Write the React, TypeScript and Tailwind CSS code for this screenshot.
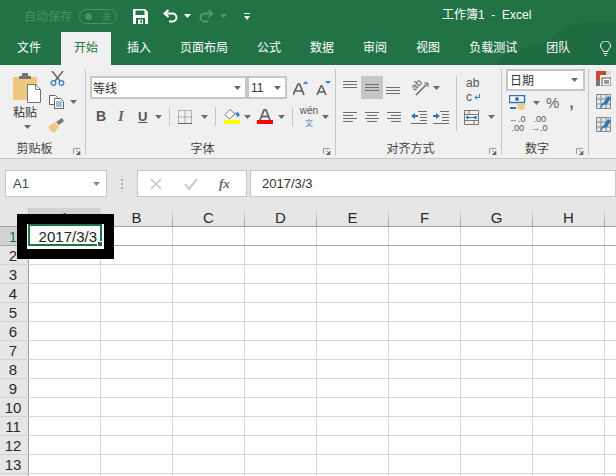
const sansFont = "font-['Liberation_Sans','Noto_Sans_CJK_SC',sans-serif]";

const tabs = ['文件', '开始', '插入', '页面布局', '公式', '数据', '审阅', '视图', '负载测试', '团队'];
const columns = ['A', 'B', 'C', 'D', 'E', 'F', 'G', 'H', ''];
const rows = [1, 2, 3, 4, 5, 6, 7, 8, 9, 10, 11, 12, 13, 14];

function Caret({ className = '', color = '#6a6a6a' }: { className?: string; color?: string }) {
    return (
        <svg width="7" height="4" viewBox="0 0 7 4" className={`shrink-0 ${className}`}>
            <path d="M0 0h7L3.5 4z" fill={color} />
        </svg>
    );
}

function Launcher() {
    return (
        <svg width="8" height="7" viewBox="0 0 8 7" className="absolute right-[4px] bottom-[0px]">
            <path d="M0.5 6V0.5H7" fill="none" stroke="#9a9a9a" />
            <path d="M3 2l3.5 3.5M7 3v4H3z" fill="#6a6a6a" stroke="#6a6a6a" strokeWidth="0.7" />
        </svg>
    );
}

function Lines({ ys, xs }: { ys: number[]; xs: [number, number][] }) {
    return (
        <svg width="15" height="15" viewBox="0 0 15 15" className="shrink-0">
            {ys.map((y, i) => (
                <path key={i} d={`M${xs[i][0]} ${y}.5H${xs[i][1]}`} stroke="#6f6f6f" />
            ))}
        </svg>
    );
}

const full: [number, number][] = [[0, 14], [0, 14], [0, 14], [0, 14]];

function Group({ width, label, children, launcher = true }: { width: string; label: string; children: React.ReactNode; launcher?: boolean }) {
    return (
        <div className={`relative flex h-[86px] shrink-0 flex-col border-r border-[#c6c6c6] ${width}`}>
            <div className="h-[71px]">{children}</div>
            <div className="flex h-[15px] items-center justify-center pr-[16px] text-[12px] leading-none text-[#444]">{label}</div>
            {launcher && <Launcher />}
        </div>
    );
}

function TitleBar() {
    return (
        <div className="flex h-[32px] items-center">
            <span className="ml-[24px] text-[12px] text-[#4d8f68]">自动保存</span>
            <div className="ml-[7px] flex h-[15px] w-[38px] items-center justify-between rounded-full border border-[#4d8f68] pr-[5px] pl-[5px]">
                <div className="h-[7px] w-[7px] rounded-full bg-[#4d8f68]" />
                <span className="text-[9px] leading-none text-[#4d8f68]">关</span>
            </div>
            <svg width="15" height="15" viewBox="0 0 15 15" className="ml-[16px]">
                <path d="M0 0h12l3 3v12H0z" fill="#fff" />
                <path d="M2.500 1.500h9v4.500h-9z" fill="#217346" />
                <path d="M3 9h9v6H3z" fill="#217346" />
                <path d="M5 10.500h5V15H5z" fill="#fff" />
                <path d="M7.500 11h1.500v3H7.500z" fill="#217346" />
            </svg>
            <svg width="15" height="14" viewBox="0 0 15 14" className="ml-[15px]">
                <path d="M5.500 1L1.500 4.500l4 3.500" fill="none" stroke="#fff" strokeWidth="2" />
                <path d="M2 4.500h7.500a4 4 0 0 1 0 8H6" fill="none" stroke="#fff" strokeWidth="2" />
            </svg>
            <Caret className="ml-[6px]" color="#fff" />
            <svg width="15" height="14" viewBox="0 0 15 14" className="ml-[8px]">
                <path d="M9.500 1l4 3.500-4 3.500" fill="none" stroke="#56966f" strokeWidth="2" />
                <path d="M13 4.500H5.500a4 4 0 0 0 0 8H9" fill="none" stroke="#56966f" strokeWidth="2" />
            </svg>
            <Caret className="ml-[6px]" color="#56966f" />
            <svg width="6" height="7" viewBox="0 0 6 7" className="ml-[17px]">
                <path d="M0 0h6v1H0zM0 3h6L3 7z" fill="#fff" />
            </svg>
            <span className={`absolute left-[442px] pb-[2px] text-[12px] whitespace-pre text-white ${sansFont}`}>工作簿1  -  Excel</span>
        </div>
    );
}

function TabRow() {
    return (
        <div className="flex h-[33px] gap-[3px] pl-[4px]">
            {tabs.map((t, i) => (
                <div
                    key={t}
                    className={`flex items-center px-[13px] pb-[3px] text-[12px] ${i === 1 ? 'bg-[#f0f0f0] text-[#217346]' : 'text-white'} ${i === 0 ? 'mr-[4px]' : ''}`}
                >
                    {t}
                </div>
            ))}
            <svg width="11" height="15" viewBox="0 0 11 15" className="mt-[9px] ml-[14px]">
                <path d="M3.500 10.500C3 8 .5 7.500.5 5a5 5 0 0 1 10 0c0 2.500-2.500 3-3 5.500zM3.500 12.500h4M4.500 14.500h2" fill="none" stroke="#fff" />
            </svg>
        </div>
    );
}

function ClipboardGroup() {
    return (
        <Group width="w-[86px]" label="剪贴板">
            <div className="flex">
                <div className="ml-[13px] flex w-[28px] flex-col items-center pt-[4px]">
                    <svg width="28" height="30" viewBox="0 0 28 30">
                        <path d="M0 4h24v23H0z" fill="#edc87e" />
                        <path d="M6 3h3V0h6v3h3v3H6z" fill="#737373" />
                        <path d="M14.500 11.500h8l5 5v13h-13z" fill="#fff" stroke="#737373" />
                        <path d="M22.500 11.500v5h5" fill="none" stroke="#737373" />
                    </svg>
                    <span className="mt-[1px] mr-[4px] text-[12px] leading-[16px] whitespace-nowrap text-[#333]">粘贴</span>
                    <Caret className="mt-[5px]" />
                </div>
                <div className="ml-[8px] flex flex-col pt-[2px]">
                    <svg width="15" height="15" viewBox="0 0 15 15" className="ml-[1px]">
                        <path d="M2 0l8 10M13 0L5 10" stroke="#666" strokeWidth="1.500" />
                        <circle cx="3.500" cy="12" r="2.300" fill="none" stroke="#3f7fbd" strokeWidth="1.300" />
                        <circle cx="11.500" cy="12" r="2.300" fill="none" stroke="#3f7fbd" strokeWidth="1.300" />
                    </svg>
                    <div className="mt-[9px] flex items-center">
                        <svg width="15" height="14" viewBox="0 0 15 14">
                            <path d="M.5.500h6l2 2v7h-8z" fill="#fff" stroke="#666" />
                            <path d="M5.500 3.500h6l3 3v7h-9z" fill="#fff" stroke="#666" />
                            <path d="M7 7h6M7 9h6M7 11h6" stroke="#3f7fbd" />
                        </svg>
                        <Caret className="ml-[6px]" />
                    </div>
                    <svg width="16" height="15" viewBox="0 0 16 15" className="mt-[9px]">
                        <path d="M0 8l6-4 4 5-5 6-5-4z" fill="#edc87e" />
                        <path d="M7 4l6-4 2 3-5 4z" fill="#777" />
                    </svg>
                </div>
            </div>
        </Group>
    );
}

function FontGroup() {
    return (
        <Group width="w-[250px]" label="字体">
            <div className="flex flex-col pt-[7px]">
                <div className="flex items-center">
                    <div className="ml-[4px] flex h-[23px] w-[157px] items-center justify-between border-2 border-[#c6c6c6] bg-white pr-[4px] pl-[1px] text-[12px] text-[#333]">
                        <span>等线</span>
                        <Caret />
                    </div>
                    <div className="flex h-[23px] w-[40px] items-center justify-between border-2 border-[#c6c6c6] bg-white pr-[4px] pl-[2px] text-[12px] text-[#333]">
                        <span className={sansFont}>11</span>
                        <Caret />
                    </div>
                    <svg width="15" height="16" viewBox="0 0 15 16" className="ml-[6px]">
                        <path d="M0 15L5 4h1.500L11 15M2.500 11h6" fill="none" stroke="#5e5e5e" strokeWidth="1.700" />
                        <path d="M10 4l2.500-3L15 4z" fill="#3f7fbd" />
                    </svg>
                    <svg width="15" height="16" viewBox="0 0 15 16" className="ml-[8px]">
                        <path d="M1 15L5 6h1l4 9M3 12h5" fill="none" stroke="#5e5e5e" strokeWidth="1.600" />
                        <path d="M9 1h6l-3 3z" fill="#3f7fbd" />
                    </svg>
                </div>
                <div className="mt-[6px] flex h-[23px] items-center">
                    <span className={`ml-[10px] w-[8px] text-[14px] font-bold text-[#555] ${sansFont}`}>B</span>
                    <span className="ml-[14px] w-[8px] font-['Liberation_Serif',serif] text-[15px] font-bold text-[#666] italic">I</span>
                    <span className={`ml-[12px] w-[10px] text-[13px] font-bold text-[#555] underline ${sansFont}`}>U</span>
                    <Caret className="ml-[7px]" />
                    <div className="ml-[7px] h-[19px] w-px bg-[#c6c6c6]" />
                    <svg width="14" height="14" viewBox="0 0 14 14" className="ml-[8px]">
                        <path d="M.5.500h13v13H.5zM7 .500v13M.5 7h13" fill="none" stroke="#777" strokeDasharray="1 1" />
                        <path d="M0 13.500h14" stroke="#666" />
                    </svg>
                    <Caret className="ml-[9px]" />
                    <div className="ml-[7px] h-[19px] w-px bg-[#c6c6c6]" />
                    <div className="ml-[7px] flex w-[17px] flex-col items-center">
                        <svg width="16" height="11" viewBox="0 0 16 11">
                            <path d="M6 .500L1 5.500l4.500 4.500 5.500-5z" fill="#fff" stroke="#777" />
                            <path d="M11 4c3-2 5 0 4.500 3l-2 1z" fill="#3f7fbd" />
                        </svg>
                        <div className="h-[4px] w-[16px] bg-[#ffff00]" />
                    </div>
                    <Caret className="ml-[4px]" />
                    <div className="ml-[6px] flex w-[16px] flex-col items-center">
                        <svg width="12" height="11" viewBox="0 0 12 11">
                            <path d="M1 11L5 1h2l4 10M3 7.500h6" fill="none" stroke="#666" strokeWidth="1.800" />
                        </svg>
                        <div className="h-[4px] w-[16px] bg-[#ff0000]" />
                    </div>
                    <Caret className="ml-[5px]" />
                    <div className="ml-[7px] h-[19px] w-px bg-[#c6c6c6]" />
                    <div className="ml-[8px] flex w-[16px] flex-col items-center">
                        <span className={`text-[10px] leading-[12px] text-[#555] ${sansFont}`}>wén</span>
                        <span className="text-[8px] leading-[12px] text-[#3f7fbd]">文</span>
                    </div>
                    <Caret className="ml-[5px]" />
                </div>
            </div>
        </Group>
    );
}

function AlignGroup() {
    return (
        <Group width="w-[166px]" label="对齐方式">
            <div className="flex pt-[7px]">
                <div className="flex w-[120px] flex-col">
                    <div className="flex h-[23px] items-center pl-[7px]">
                        <Lines ys={[1, 4, 7]} xs={full} />
                        <div className="ml-[3px] flex h-[23px] w-[22px] items-center justify-center bg-[#c6c6c6]">
                            <Lines ys={[4, 7, 10]} xs={full} />
                        </div>
                        <div className="ml-[3px]">
                            <Lines ys={[7, 10, 13]} xs={full} />
                        </div>
                        <div className="relative ml-[10px] h-[16px] w-[19px]">
                            <span className={`absolute top-[-1px] left-[0px] -rotate-45 text-[10px] leading-[12px] text-[#555] ${sansFont}`}>ab</span>
                            <svg width="19" height="16" viewBox="0 0 19 16">
                                <path d="M5 15L16 4" stroke="#666" strokeWidth="1.500" />
                                <path d="M13 3h4v4" fill="none" stroke="#666" />
                            </svg>
                        </div>
                        <Caret className="ml-[3px]" />
                    </div>
                    <div className="mt-[9px] flex h-[18px] items-center pl-[7px]">
                        <Lines ys={[2, 5, 8, 11]} xs={[[0, 14], [0, 10], [0, 14], [0, 10]]} />
                        <div className="ml-[7px]">
                            <Lines ys={[2, 5, 8, 11]} xs={[[0, 14], [2, 12], [0, 14], [2, 12]]} />
                        </div>
                        <div className="ml-[7px]">
                            <Lines ys={[2, 5, 8, 11]} xs={[[0, 14], [4, 14], [0, 14], [4, 14]]} />
                        </div>
                        <svg width="16" height="14" viewBox="0 0 16 14" className="ml-[9px]">
                            <path d="M7 1.500h9M9 4.500h7M9 7.500h7M9 10.500h7M0 13.500h16" stroke="#6f6f6f" />
                            <path d="M0 6l4-3v2h3v2H4v2z" fill="#2f74b5" />
                        </svg>
                        <svg width="16" height="14" viewBox="0 0 16 14" className="ml-[6px]">
                            <path d="M7 1.500h9M9 4.500h7M9 7.500h7M9 10.500h7M0 13.500h16" stroke="#6f6f6f" />
                            <path d="M7 6L3 3v2H0v2h3v2z" fill="#2f74b5" />
                        </svg>
                    </div>
                </div>
                <div className="h-[55px] w-px bg-[#c6c6c6]" />
                <div className="flex flex-col">
                    <div className="ml-[9px] flex h-[23px] flex-col items-start">
                        <span className={`text-[12px] leading-[14px] text-[#555] ${sansFont}`}>ab</span>
                        <div className="flex items-center">
                            <span className={`text-[12px] leading-[14px] text-[#555] ${sansFont}`}>c</span>
                            <svg width="6" height="6" viewBox="0 0 6 6" className="ml-[2px]">
                                <path d="M5.500 0v3.500H1M3 1.500L1 3.500l2 2" fill="none" stroke="#2f74b5" />
                            </svg>
                        </div>
                    </div>
                    <div className="mt-[9px] ml-[7px] flex h-[18px] items-center">
                        <svg width="15" height="15" viewBox="0 0 15 15">
                            <path d="M.5.500h14v14H.5zM.5 4.500h14M.5 10.500h14M5 .500v4M10 10.500v4" fill="none" stroke="#777" />
                            <path d="M2 7.500h11M2 7.500l2-1.500v3zM13 7.500l-2-1.500v3z" stroke="#2f74b5" fill="#2f74b5" />
                        </svg>
                        <Caret className="ml-[9px]" />
                    </div>
                </div>
            </div>
        </Group>
    );
}

function NumberGroup() {
    return (
        <Group width="w-[87px]" label="数字">
            <div className="flex flex-col pt-[0px]">
                <div className="ml-[4px] flex h-[22px] w-[79px] items-center justify-between border-2 border-[#c6c6c6] bg-white pr-[5px] pl-[2px] text-[12px] text-[#333]">
                    <span>日期</span>
                    <Caret />
                </div>
                <div className="mt-[3px] flex h-[17px] items-center pl-[7px]">
                    <svg width="17" height="16" viewBox="0 0 17 16">
                        <path d="M.5.500h15v7H.5z" fill="#fff" stroke="#2f74b5" strokeWidth="1.500" />
                        <circle cx="8" cy="4" r="2" fill="#2f74b5" />
                        <ellipse cx="12" cy="10" rx="4" ry="1.500" fill="#edc87e" />
                        <ellipse cx="12" cy="13" rx="4" ry="1.500" fill="#edc87e" />
                        <path d="M1 13h6" stroke="#2f74b5" strokeWidth="2" />
                    </svg>
                    <Caret className="ml-[7px]" />
                    <span className={`ml-[6px] text-[15px] leading-none text-[#666] ${sansFont}`}>%</span>
                    <span className={`ml-[10px] text-[16px] leading-none font-bold text-[#666] ${sansFont}`}>,</span>
                </div>
                <div className="mt-[4px] flex h-[18px] items-center gap-[7px] pl-[7px]">
                    <div className={`flex w-[15px] flex-col text-right text-[9px] leading-[9px] text-[#555] ${sansFont}`}>
                        <span className="h-[9px] whitespace-nowrap"><span className="text-[#2f74b5]">←</span>.0</span>
                        <span className="h-[9px]">.00</span>
                    </div>
                    <div className={`flex w-[15px] flex-col text-right text-[9px] leading-[9px] text-[#555] ${sansFont}`}>
                        <span className="h-[9px]">.00</span>
                        <span className="h-[9px] whitespace-nowrap"><span className="text-[#2f74b5]">→</span>.0</span>
                    </div>
                </div>
            </div>
        </Group>
    );
}

function StylesGroup() {
    return (
        <div className="flex flex-col gap-[8px] pt-[2px] pl-[7px]">
            <svg width="15" height="15" viewBox="0 0 15 15">
                <path d="M0 0h15v4H0z" fill="#d9d9d9" />
                <path d="M0 0h4v15H0z" fill="#777" />
                <path d="M0 0h10v4H0zM0 5h4v4H0z" fill="#d24726" />
                <path d="M6 7h9v8H6z" fill="#fff" stroke="#555" />
                <path d="M8 10h5M8 12h5" stroke="#333" />
            </svg>
            {[0, 1].map((i) => (
                <svg key={i} width="15" height="15" viewBox="0 0 15 15">
                    <path d="M.5.500h14v14H.5zM5 .500v14M10 .500v14M.5 5h14M.5 10h14" fill="#dfe6ee" stroke="#888" />
                    <path d="M4 15l3-4 4-1 4-6-3-2-4 6-3 3z" fill="#2f74b5" />
                </svg>
            ))}
        </div>
    );
}

function FormulaBar() {
    return (
        <div className="flex h-[27px] items-stretch">
            <div className="ml-[5px] flex w-[102px] items-center justify-between border border-[#c6c6c6] bg-white pr-[6px] pl-[7px] text-[13px] text-[#444]">
                <span className={sansFont}>A1</span>
                <Caret color="#8a8a8a" />
            </div>
            <div className="ml-[14px] flex w-[2px] flex-col justify-center gap-[2px]">
                <div className="h-[2px] w-[2px] bg-[#aaa]" />
                <div className="h-[2px] w-[2px] bg-[#aaa]" />
                <div className="h-[2px] w-[2px] bg-[#aaa]" />
            </div>
            <div className="ml-[14px] flex w-[110px] items-center border border-[#c6c6c6] bg-white">
                <svg width="12" height="12" viewBox="0 0 12 12" className="ml-[12px]">
                    <path d="M1 1l10 10M11 1L1 11" stroke="#c6c6c6" strokeWidth="1.500" />
                </svg>
                <svg width="14" height="12" viewBox="0 0 14 12" className="ml-[22px]">
                    <path d="M1 6l4 5 8-10" fill="none" stroke="#c6c6c6" strokeWidth="2" />
                </svg>
                <span className="ml-[21px] font-['Liberation_Serif',serif] text-[13px] font-bold text-[#666] italic">fx</span>
            </div>
            <div className="ml-[3px] flex flex-1 items-center border border-[#c6c6c6] bg-white pl-[11px] text-[13px] text-[#333]">
                <span className={sansFont}>2017/3/3</span>
            </div>
        </div>
    );
}

function Sheet() {
    return (
        <div className={`relative mt-[11px] flex-1 overflow-hidden bg-white text-[15px] leading-none text-[#2a2a2a] ${sansFont}`}>
            <div className="flex h-[19px] border-b border-[#9f9f9f] bg-[#e6e6e6]">
                <div className="flex w-[29px] shrink-0 items-end justify-end border-r border-[#c0c0c0] pr-[2px] pb-[2px]">
                    <svg width="9" height="9" viewBox="0 0 9 9">
                        <path d="M9 0v9H0z" fill="#c6c6c6" />
                    </svg>
                </div>
                {columns.map((c, i) => (
                    <div key={i} className={`flex w-[72px] shrink-0 items-center ${i === 0 ? 'bg-[#d2d2d2] text-[#217346]' : ''}`}>
                        <span className="flex-1 text-center">{c}</span>
                        <div className="h-full w-px bg-gradient-to-b from-[#e6e6e6] to-[#9a9a9a]" />
                    </div>
                ))}
            </div>
            {rows.map((r) => (
                <div key={r} className={`flex h-[19px] border-b ${r === 1 ? 'border-[#a6a6a6]' : 'border-[#d4d4d4]'}`}>
                    <div className={`flex w-[29px] shrink-0 items-center justify-center border-r border-[#9f9f9f] pr-[2px] ${r === 1 ? 'bg-[#d2d2d2] text-[#217346]' : 'bg-[#e6e6e6]'}`}>
                        {r < 14 ? r : ''}
                    </div>
                    {columns.map((c, i) => (
                        <div key={i} className="w-[72px] shrink-0 border-r border-[#d4d4d4]" />
                    ))}
                </div>
            ))}
            {/* black box drawn over the selected cell */}
            <div className="absolute top-[6px] left-[17px] h-[45px] w-[97px] border-[10px] border-black bg-white">
                <div className="relative mt-[0px] ml-[1px] flex h-[22px] w-[74px] items-center justify-end border-2 border-[#217346] pt-[3px] pr-[3px] text-[15px] text-[#222]">
                    2017/3/3
                    <div className="absolute -right-[3px] -bottom-[3px] h-[6px] w-[6px] border border-white bg-[#217346]" />
                </div>
            </div>
        </div>
    );
}

export default function App() {
    return (
        <div className={`flex h-[476px] w-[616px] flex-col overflow-hidden bg-[#e6e6e6] font-['Noto_Sans_CJK_SC',sans-serif]`}>
            <div className="relative bg-[#217346]">
                <svg width="130" height="50" viewBox="0 0 130 50" className="absolute top-[15px] right-0">
                    <path d="M10 50C20 30 50 38 70 20 85 6 110 5 130 8v42z" fill="#1f6b41" />
                </svg>
                <div className="relative">
                    <TitleBar />
                    <TabRow />
                </div>
            </div>
            <div className="flex h-[94px] shrink-0 border-b border-[#c6c6c6] bg-[#f0f0f0] pt-[4px]">
                <ClipboardGroup />
                <FontGroup />
                <AlignGroup />
                <NumberGroup />
                <StylesGroup />
            </div>
            <div className="mt-[11px]">
                <FormulaBar />
            </div>
            <Sheet />
        </div>
    );
}
